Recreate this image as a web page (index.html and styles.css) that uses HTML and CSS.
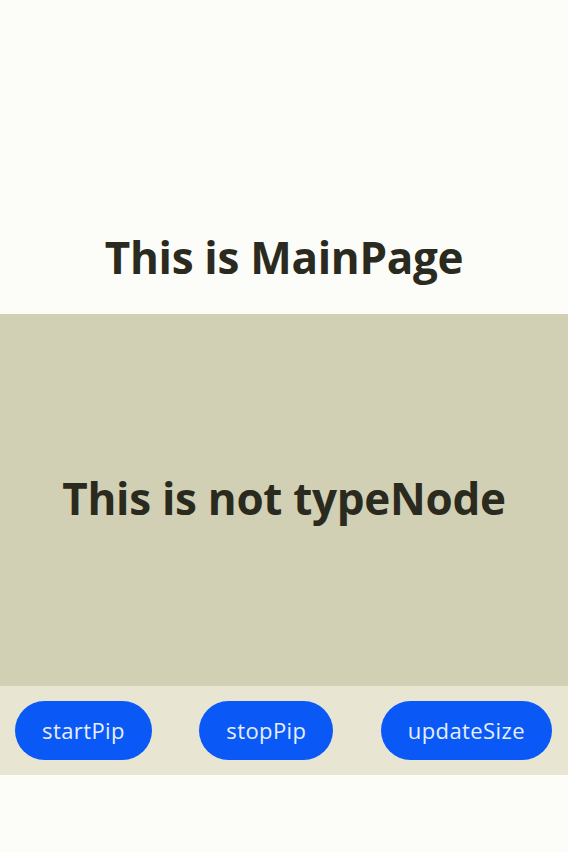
FILE: index.html
```html
<!DOCTYPE html>
<html>

<head>
    <meta charset="utf-8">
    <link rel="stylesheet" href="styles.css">
</head>

<body>
    <div id="page">
        <div id="top">
            <div class="title">This is MainPage</div>
        </div>
        <div id="node">
            <div class="title">This is not typeNode</div>
        </div>
        <div id="controls">
            <div class="button">startPip</div>
            <div class="button">stopPip</div>
            <div class="button">updateSize</div>
        </div>
    </div>
</body>

</html>
```

FILE: styles.css
```css
* {
    margin: 0;
    padding: 0;
    box-sizing: border-box;
}

body {
    background-color: #fcfcf8;
    font-family: 'Open Sans', 'Noto Sans', sans-serif;
}

div#page {
    display: flex;
    flex-direction: column;
    min-height: 852px;
}

div#top {
    height: 314px;
    display: flex;
    flex-direction: column;
    justify-content: flex-end;
    align-items: center;
    padding-bottom: 27px;
}

div.title {
    font-size: 44px;
    font-weight: 700;
    color: #2a2a1e;
    letter-spacing: -0.3px;
}

div#node {
    height: 372px;
    background-color: #d2d0b4;
    display: flex;
    justify-content: center;
    align-items: center;
    padding-bottom: 4px;
}

div#controls {
    height: 89px;
    background-color: #e8e5d2;
    display: flex;
    flex-direction: row;
    justify-content: space-between;
    align-items: center;
    padding: 0 16px 0 15px;
}

div.button {
    height: 59px;
    padding: 0 27px 2px;
    display: flex;
    align-items: center;
    border-radius: 30px;
    background-color: #0a59f7;
    color: #e6eefc;
    font-size: 22px;
    letter-spacing: 0.4px;
}
```
